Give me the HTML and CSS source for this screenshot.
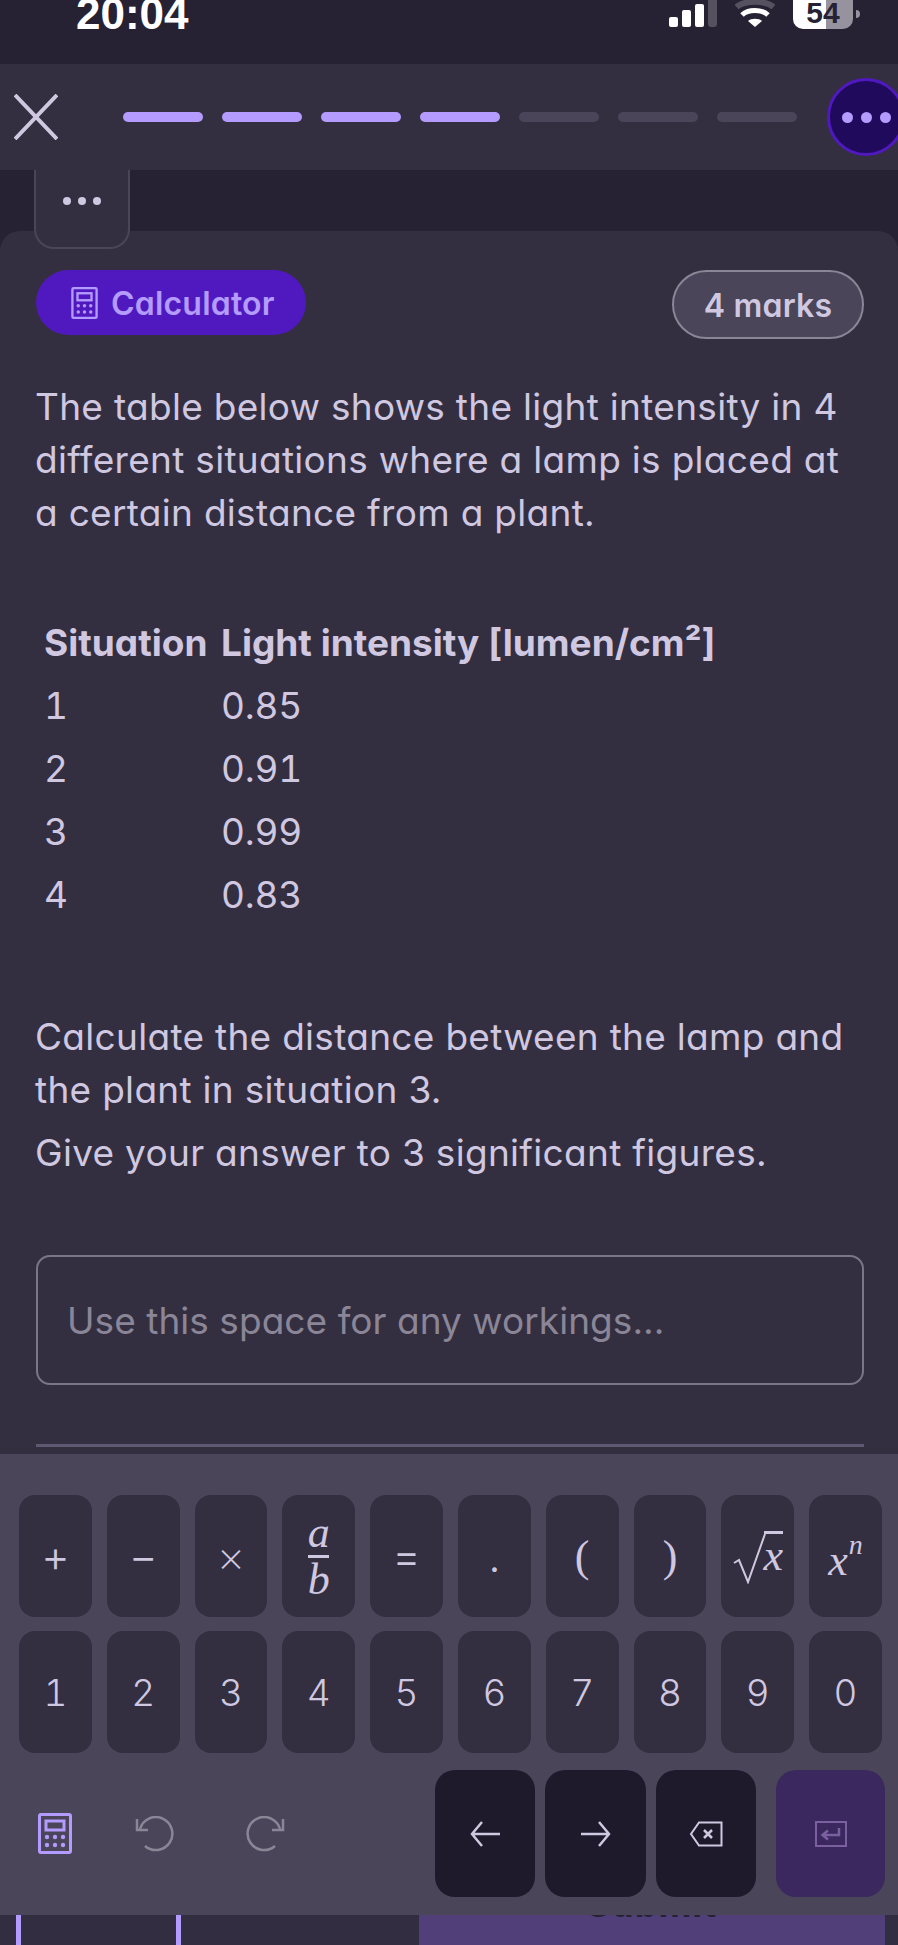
FILE: index.html
```html
<!DOCTYPE html>
<html lang="en">
<head>
  <meta charset="UTF-8" />
  <meta name="viewport" content="width=device-width, initial-scale=1" />
  <title>Question</title>
  <link rel="stylesheet" href="styles.css">
</head>
<body>
  <svg class="defs" width="0" height="0">
    <symbol id="calc" viewBox="0 0 34 41">
      <rect x="1.5" y="1.5" width="31" height="38" rx="1.5" fill="none" stroke="currentColor" stroke-width="3"/>
      <rect x="8" y="8" width="18" height="9" fill="none" stroke="currentColor" stroke-width="3"/>
      <g fill="currentColor">
        <circle cx="9" cy="24" r="2.2"/><circle cx="17" cy="24" r="2.2"/><circle cx="25" cy="24" r="2.2"/>
        <circle cx="9" cy="32" r="2.2"/><circle cx="17" cy="32" r="2.2"/><circle cx="25" cy="32" r="2.2"/>
      </g>
    </symbol>
  </svg>

  <div id="status">
    <span class="time">20:04</span>
    <div class="status-icons">
      <div class="signal">
        <i class="s1"></i><i class="s2"></i><i class="s3"></i><i class="s4"></i>
      </div>
      <svg class="wifi" width="40" height="27" viewBox="0 0 40 27">
        <path d="M1.5 7 C10 0 30 0 38.5 7" fill="none" stroke="#55515f" stroke-width="6"/>
        <path d="M7 15 C13 9 27 9 33 15" fill="none" stroke="#fff" stroke-width="5"/>
        <path d="M20 27 L13 21 C16 18 24 18 27 21 Z" fill="#fff"/>
      </svg>
      <div class="battery"><span>54</span></div>
      <i class="nub"></i>
    </div>
  </div>

  <div id="topbar">
    <svg class="close" width="44" height="46" viewBox="0 0 44 46">
      <path d="M1 1 L43 45 M43 1 L1 45" stroke="#cfc8e0" stroke-width="4"/>
    </svg>
    <div class="progress">
      <i class="seg done"></i><i class="seg done"></i><i class="seg done"></i><i class="seg done"></i>
      <i class="seg"></i><i class="seg"></i><i class="seg"></i>
    </div>
    <div class="more"><i></i><i></i><i></i></div>
  </div>

  <div id="card">
    <div class="tab"><i></i><i></i><i></i></div>

    <div class="card-head">
      <div class="pill-calc">
        <svg width="27" height="32"><use href="#calc"/></svg>
        <span>Calculator</span>
      </div>
      <div class="pill-marks">4 marks</div>
    </div>

    <p class="intro">The table below shows the light intensity in 4 different situations where a lamp is placed at a certain distance from a plant.</p>

    <table class="data">
      <tr><th>Situation</th><th>Light intensity [lumen/cm²]</th></tr>
      <tr><td>1</td><td>0.85</td></tr>
      <tr><td>2</td><td>0.91</td></tr>
      <tr><td>3</td><td>0.99</td></tr>
      <tr><td>4</td><td>0.83</td></tr>
    </table>

    <p class="ask">Calculate the distance between the lamp and the plant in situation 3.</p>
    <p class="ask second">Give your answer to 3 significant figures.</p>

    <div class="workings">Use this space for any workings...</div>
    <div class="rule"></div>
  </div>

  <div id="keyboard">
    <div class="keys">
      <div class="key sym">+</div>
      <div class="key sym">−</div>
      <div class="key sym thin">×</div>
      <div class="key math frac"><span>a</span><i></i><span>b</span></div>
      <div class="key sym">=</div>
      <div class="key sym">.</div>
      <div class="key paren">(</div>
      <div class="key paren">)</div>
      <div class="key math root">
        <svg width="34" height="52" viewBox="0 0 34 52">
          <path d="M1 31 L6 28 L15 50 L32 2" fill="none" stroke="#cfc8e0" stroke-width="2"/>
        </svg>
        <span>x</span>
      </div>
      <div class="key math power"><span>x</span><sup>n</sup></div>
      <div class="key">1</div>
      <div class="key">2</div>
      <div class="key">3</div>
      <div class="key">4</div>
      <div class="key">5</div>
      <div class="key">6</div>
      <div class="key">7</div>
      <div class="key">8</div>
      <div class="key">9</div>
      <div class="key">0</div>
    </div>

    <div class="tools">
      <div class="tools-left">
        <svg class="tool-calc" width="34" height="41"><use href="#calc"/></svg>
        <svg width="40" height="36" viewBox="0 0 40 36">
          <path d="M5 13 A16.5 16.5 0 1 1 10 30" fill="none" stroke="#8a8697" stroke-width="2.5"/>
          <path d="M2 3 V14 H13" fill="none" stroke="#8a8697" stroke-width="2.5"/>
        </svg>
        <svg class="flip" width="40" height="36" viewBox="0 0 40 36">
          <path d="M5 13 A16.5 16.5 0 1 1 10 30" fill="none" stroke="#8a8697" stroke-width="2.5"/>
          <path d="M2 3 V14 H13" fill="none" stroke="#8a8697" stroke-width="2.5"/>
        </svg>
      </div>
      <div class="action">
        <svg width="30" height="26" viewBox="0 0 30 26">
          <path d="M30 13 H2 M12 1 L2 13 L12 25" fill="none" stroke="#cfc8e0" stroke-width="2.5"/>
        </svg>
      </div>
      <div class="action wide">
        <svg width="30" height="26" viewBox="0 0 30 26">
          <path d="M0 13 H28 M18 1 L28 13 L18 25" fill="none" stroke="#cfc8e0" stroke-width="2.5"/>
        </svg>
      </div>
      <div class="action">
        <svg width="34" height="26" viewBox="0 0 34 26">
          <path d="M10 1.5 H32.5 V24.5 H10 L2 13 Z" fill="none" stroke="#cfc8e0" stroke-width="2"/>
          <path d="M15 9 L23 17 M23 9 L15 17" stroke="#cfc8e0" stroke-width="2.5"/>
        </svg>
      </div>
      <div class="action enter">
        <svg width="32" height="26" viewBox="0 0 32 26">
          <rect x="1" y="1" width="30" height="24" fill="none" stroke="#7a609f" stroke-width="2"/>
          <path d="M24 7 V14 H8 M13 9.5 L7.5 14 L13 18.5" fill="none" stroke="#7a609f" stroke-width="2.5"/>
        </svg>
      </div>
    </div>
  </div>

  <div id="footer">
    <div class="footer-left"></div>
    <div class="submit"><span>Submit</span></div>
  </div>
</body>
</html>
```

FILE: styles.css
```css
html, body {
  margin: 0;
  padding: 0;
  width: 898px;
  height: 1945px;
  overflow: hidden;
  background: #262233;
  color: #cfc8e0;
  font-family: Inter, "Noto Sans", sans-serif;
  font-feature-settings: "cv11" 1;
}

.defs {
  position: absolute;
}

i {
  display: block;
}

/* status bar */
#status {
  height: 64px;
  box-sizing: border-box;
  padding: 0 38px 37px 76px;
  display: flex;
  justify-content: space-between;
  align-items: flex-end;
  overflow: hidden;
}

.time {
  font-family: "Liberation Sans", sans-serif;
  font-size: 44px;
  line-height: 27px;
  height: 27px;
  color: #fff;
  font-weight: 700;
  font-feature-settings: normal;
}

.status-icons {
  display: flex;
  align-items: flex-end;
}

.signal {
  display: flex;
  align-items: flex-end;
  gap: 4px;
}

.signal i {
  width: 9px;
  background: #fff;
  border-radius: 2px;
}

.s1 { height: 10px; }
.s2 { height: 17px; }
.s3 { height: 23px; }
.signal .s4 { height: 27px; background: #55515f; border-radius: 0 0 3px 3px; }

.wifi {
  margin: 0 18px;
}

.battery {
  width: 60px;
  height: 29px;
  margin-bottom: -2px;
  border-radius: 0 0 10px 10px;
  background: linear-gradient(to right, #fff 0, #fff 33px, #96939f 33px);
  color: #262233;
  font-family: "Liberation Sans", sans-serif;
  font-feature-settings: normal;
  font-weight: 700;
  font-size: 30px;
  line-height: 26px;
  text-align: center;
}

.nub {
  width: 4px;
  height: 8px;
  margin: 0 0 9px 3px;
  background: #96939f;
  border-radius: 0 4px 4px 0;
}

/* top bar */
#topbar {
  height: 106px;
  background: #342f40;
  display: flex;
  align-items: center;
  padding-left: 14px;
}

.close {
  margin-right: 65px;
  flex: none;
}

.progress {
  display: flex;
  gap: 19px;
  margin-right: 30px;
}

.seg {
  width: 80px;
  height: 10px;
  border-radius: 5px;
  background: #4a4558;
}

.seg.done {
  background: #b49bff;
}

.more {
  flex: none;
  width: 78px;
  height: 78px;
  box-sizing: border-box;
  border: 3px solid #5019bf;
  border-radius: 50%;
  background: #1f0a5c;
  display: flex;
  align-items: center;
  justify-content: center;
  gap: 8px;
}

.more i {
  width: 11px;
  height: 11px;
  border-radius: 50%;
  background: #b49bff;
}

/* question card */
#card {
  position: relative;
  margin-top: 61px;
  height: 1223px;
  box-sizing: border-box;
  padding: 39px 34px 0 36px;
  background: #342f40;
  border-radius: 20px 20px 0 0;
}

.tab {
  position: absolute;
  left: 34px;
  top: -61px;
  width: 96px;
  height: 79px;
  box-sizing: border-box;
  background: #342f40;
  border: 2px solid #4a4558;
  border-top: none;
  border-radius: 0 0 20px 20px;
  display: flex;
  align-items: center;
  justify-content: center;
  gap: 7px;
  padding-bottom: 16px;
}

.tab i {
  width: 8px;
  height: 8px;
  border-radius: 50%;
  background: #cfc8e0;
}

.card-head {
  display: flex;
  justify-content: space-between;
  align-items: flex-start;
}

.pill-calc {
  width: 270px;
  height: 65px;
  box-sizing: border-box;
  padding-left: 35px;
  border-radius: 33px;
  background: #5019bf;
  color: #b49bff;
  display: flex;
  align-items: center;
  gap: 13px;
  font-size: 32px;
  font-weight: 600;
  letter-spacing: 0.2px;
}

.pill-calc svg {
  flex: none;
}

.pill-calc span {
  padding-top: 2px;
}

.pill-marks {
  width: 192px;
  height: 69px;
  box-sizing: border-box;
  border: 2px solid #8a8697;
  border-radius: 35px;
  background: #4a4558;
  padding-top: 2px;
  display: flex;
  align-items: center;
  justify-content: center;
  font-size: 32px;
  font-weight: 600;
  letter-spacing: 0.2px;
}

.intro, .ask {
  margin: 0 0 0 -1px;
  font-size: 37px;
  line-height: 53px;
  letter-spacing: 0.3px;
}

.intro {
  margin-top: 41px;
}

.data {
  margin-top: 72px;
  border-collapse: collapse;
  font-size: 37px;
  font-feature-settings: "cv11" 1, "tnum" 1;
}

.data th, .data td {
  height: 63px;
  padding: 0 0 0 8px;
  text-align: left;
  letter-spacing: -0.2px;
}

.data th {
  font-weight: 700;
  letter-spacing: 0;
  font-feature-settings: "cv11" 1;
}

.data th:first-child {
  width: 169px;
  white-space: nowrap;
}

.ask {
  margin-top: 84px;
}

.ask.second {
  margin-top: 10px;
}

.workings {
  margin-top: 76px;
  height: 130px;
  box-sizing: border-box;
  border: 2px solid #7a7688;
  border-radius: 14px;
  padding-left: 29px;
  display: flex;
  align-items: center;
  color: #8a8697;
  font-size: 37px;
  letter-spacing: 0.05px;
}

.rule {
  margin-top: 59px;
  height: 3px;
  background: #5e5870;
}

/* keyboard */
#keyboard {
  height: 461px;
  box-sizing: border-box;
  padding-top: 41px;
  background: #4a4558;
}

.keys {
  display: grid;
  grid-template-columns: repeat(10, 1fr);
  grid-auto-rows: 122px;
  column-gap: 15px;
  row-gap: 14px;
  padding: 0 16px 0 19px;
}

.key {
  background: #342f40;
  border-radius: 16px;
  display: flex;
  align-items: center;
  justify-content: center;
  font-size: 37px;
  font-weight: 300;
  font-feature-settings: "tnum" 1;
}

.sym {
  font-size: 44px;
  font-weight: 300;
}

.thin {
  font-weight: 200;
}

.paren {
  font-family: "Liberation Serif", serif;
  font-size: 44px;
  font-feature-settings: normal;
}

.math {
  font-family: "Liberation Serif", serif;
  font-style: italic;
  font-weight: 400;
  font-feature-settings: normal;
  font-size: 44px;
}

.frac {
  flex-direction: column;
  line-height: 44px;
}

.frac i {
  width: 21px;
  height: 3px;
  background: #cfc8e0;
}

.root svg {
  flex: none;
  margin-top: 4px;
}

.root span {
  border-top: 3px solid #cfc8e0;
  margin-left: -3px;
  line-height: 44px;
  margin-top: -4px;
}

.power span {
  margin-top: 8px;
}

.power sup {
  font-size: 28px;
  line-height: 1;
  margin: -22px 0 0 1px;
}

.tools {
  margin-top: 17px;
  display: flex;
  gap: 10px;
  padding-left: 38px;
}

.tools-left {
  display: flex;
  align-items: center;
  width: 387px;
  gap: 63px;
}

.tool-calc {
  color: #b49bff;
}

.flip {
  transform: scaleX(-1);
  margin-left: 7px;
}

.action {
  width: 100px;
  height: 127px;
  border-radius: 20px;
  background: #1e1a2c;
  display: flex;
  align-items: center;
  justify-content: center;
}

.action.wide {
  width: 101px;
}

.action.enter {
  width: 109px;
  margin-left: 10px;
  background: #3a285e;
}

/* what shows under the keyboard */
#footer {
  height: 30px;
  background: #322d40;
  display: flex;
  overflow: hidden;
}

.footer-left {
  width: 155px;
  height: 40px;
  margin: 0 238px 0 16px;
  border-left: 5px solid #b49bff;
  border-right: 5px solid #b49bff;
  border-radius: 0 0 0 8px;
}

.submit {
  width: 466px;
  background: #503f78;
  text-align: center;
  color: #262233;
  font-size: 36px;
  font-weight: 700;
  letter-spacing: 1px;
  line-height: 44px;
  overflow: hidden;
}

.submit span {
  display: block;
  margin-top: -33px;
}
```
